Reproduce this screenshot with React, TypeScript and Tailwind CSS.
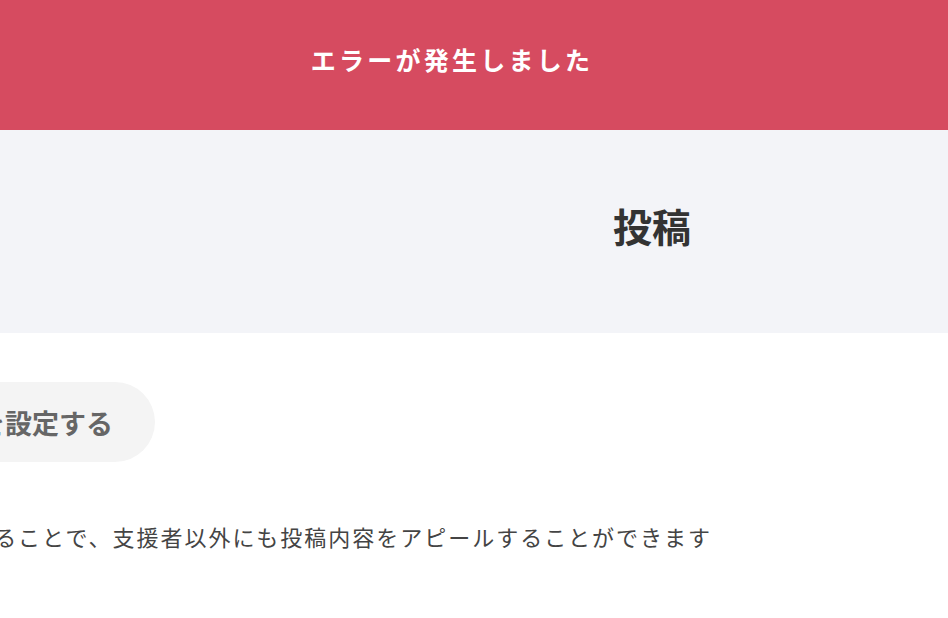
const font = { fontFamily: '"Noto Sans CJK JP", "Noto Sans", sans-serif' };

export default function App() {
    return (
        <div className="w-[948px] h-[618px] overflow-hidden bg-white" style={font}>
            <div className="h-[130px] bg-[#d64b60] pt-[47px]">
                <div className="w-[904px] text-center text-white font-bold text-[25px] leading-none tracking-[0.13em]">
                    エラーが発生しました
                </div>
            </div>

            <div className="h-[203px] bg-[#f3f4f8] pt-[76px]">
                <div className="w-[1304px] text-center text-[39px] leading-none font-bold text-[#333]">
                    投稿
                </div>
            </div>

            <div className="pt-[49px]">
                <div className="w-[155px] flex justify-end">
                    <button className="shrink-0 h-[80px] rounded-full bg-[#f4f4f4] px-[42px] text-[27px] leading-none font-bold text-[#666] whitespace-nowrap">
                        サムネイルを設定する
                    </button>
                </div>

                <div className="mt-[63px] w-[712px] flex justify-end">
                    <p className="shrink-0 whitespace-nowrap text-[22px] leading-none text-[#444] tracking-[0.09em]">
                        サムネイルを設定することで、支援者以外にも投稿内容をアピールすることができます
                    </p>
                </div>
            </div>
        </div>
    );
}
